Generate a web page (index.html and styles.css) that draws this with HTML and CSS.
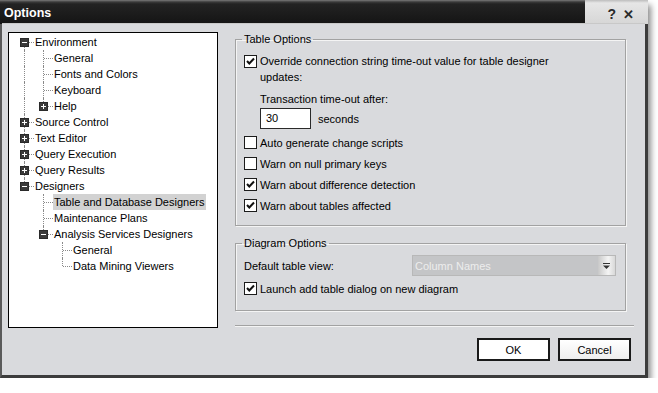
FILE: index.html
```html
<!DOCTYPE html>
<html>
<head>
<meta charset="utf-8">
<link rel="stylesheet" href="styles.css">
</head>
<body>
<div class="window">
  <div class="titlebar">
    <div class="title">Options</div>
    <div class="title-btns"><span class="tb-help">?</span><span class="tb-close">✕</span></div>
  </div>
  <div class="client">
    <div class="tree">
      <div class="node"><span class="g first"><span class="exp minus"></span></span><span class="txt">Environment</span></div>
      <div class="node"><span class="g v"></span><span class="g t"></span><span class="txt">General</span></div>
      <div class="node"><span class="g v"></span><span class="g t"></span><span class="txt">Fonts and Colors</span></div>
      <div class="node"><span class="g v"></span><span class="g t"></span><span class="txt">Keyboard</span></div>
      <div class="node"><span class="g v"></span><span class="g l"><span class="exp plus"></span></span><span class="txt">Help</span></div>
      <div class="node"><span class="g t"><span class="exp plus"></span></span><span class="txt">Source Control</span></div>
      <div class="node"><span class="g t"><span class="exp plus"></span></span><span class="txt">Text Editor</span></div>
      <div class="node"><span class="g t"><span class="exp plus"></span></span><span class="txt">Query Execution</span></div>
      <div class="node"><span class="g t"><span class="exp plus"></span></span><span class="txt">Query Results</span></div>
      <div class="node"><span class="g l"><span class="exp minus"></span></span><span class="txt">Designers</span></div>
      <div class="node"><span class="g"></span><span class="g t"></span><span class="txt sel">Table and Database Designers</span></div>
      <div class="node"><span class="g"></span><span class="g t"></span><span class="txt">Maintenance Plans</span></div>
      <div class="node"><span class="g"></span><span class="g l"><span class="exp minus"></span></span><span class="txt">Analysis Services Designers</span></div>
      <div class="node"><span class="g"></span><span class="g"></span><span class="g t"></span><span class="txt">General</span></div>
      <div class="node"><span class="g"></span><span class="g"></span><span class="g l"></span><span class="txt">Data Mining Viewers</span></div>
    </div>
    <div class="panel">
      <fieldset class="group group-table">
        <legend>Table Options</legend>
        <div class="row row-wrap">
          <span class="cb"><svg viewBox="0 0 11 11" width="11" height="11"><path d="M2 5 L4.3 7.5 L9 2.5" fill="none" stroke="#111" stroke-width="2"/></svg></span>
          <span class="wrap-text">Override connection string time-out value for table designer updates:</span>
        </div>
        <div class="sub">
          <div class="sub-label">Transaction time-out after:</div>
          <div class="sub-input"><span class="textbox">30</span><span>seconds</span></div>
        </div>
        <div class="checks">
          <div class="row"><span class="cb"></span><span>Auto generate change scripts</span></div>
          <div class="row"><span class="cb"></span><span>Warn on null primary keys</span></div>
          <div class="row"><span class="cb"><svg viewBox="0 0 11 11" width="11" height="11"><path d="M2 5 L4.3 7.5 L9 2.5" fill="none" stroke="#111" stroke-width="2"/></svg></span><span>Warn about difference detection</span></div>
          <div class="row"><span class="cb"><svg viewBox="0 0 11 11" width="11" height="11"><path d="M2 5 L4.3 7.5 L9 2.5" fill="none" stroke="#111" stroke-width="2"/></svg></span><span>Warn about tables affected</span></div>
        </div>
      </fieldset>
      <fieldset class="group group-diagram">
        <legend>Diagram Options</legend>
        <div class="combo-row">
          <span class="combo-label">Default table view:</span>
          <div class="combo"><span class="combo-text">Column Names</span><span class="combo-btn"><svg viewBox="0 0 9 8" width="9" height="8"><rect x="1" y="1" width="7" height="1" fill="#333"/><path d="M1 3.5 H8 L4.5 7 Z" fill="#333"/></svg></span></div>
        </div>
        <div class="row"><span class="cb"><svg viewBox="0 0 11 11" width="11" height="11"><path d="M2 5 L4.3 7.5 L9 2.5" fill="none" stroke="#111" stroke-width="2"/></svg></span><span>Launch add table dialog on new diagram</span></div>
      </fieldset>
      <div class="sep"></div>
      <div class="buttons">
        <button class="btn btn-default">OK</button>
        <button class="btn">Cancel</button>
      </div>
    </div>
  </div>
</div>
</body>
</html>
```
FILE: styles.css
```css
* { box-sizing: border-box; }
body {
  margin: 0;
  background: #fff;
  font: 11px "Liberation Sans", Arial, sans-serif;
  color: #000;
}
.window {
  width: 648px;
  height: 378px;
  background: #d9dadd;
  border-left: 2px solid #5a5a5a;
  border-right: 3px solid #3c3c3c;
  border-bottom: 3px solid #3c3c3c;
  box-shadow: 3px 5px 6px rgba(0,0,0,0.45);
  display: flex;
  flex-direction: column;
}
.titlebar {
  height: 24px;
  display: flex;
  margin-left: -2px;
  margin-right: -3px;
}
.title {
  flex: 1;
  background: linear-gradient(#7a7a7a 0, #3a3a3a 2px, #232323 4px, #141414 100%);
  color: #fff;
  font-weight: bold;
  font-size: 12.5px;
  padding: 6px 0 0 4px;
}
.title-btns {
  width: 63px;
  background: linear-gradient(#bdbdbd 0, #e6e6e6 3px, #d6d6d6 100%);
  display: flex;
  justify-content: flex-end;
  align-items: center;
  gap: 7px;
  padding: 4px 14px 0 0;
  color: #2a2a2a;
  font-weight: bold;
  font-size: 14px;
}
.tb-close { font-size: 13px; }
.client {
  flex: 1;
  display: grid;
  grid-template-columns: 210px 1fr;
  column-gap: 17px;
  padding: 8px 13px 0 6px;
  border-top: 1px solid #c8c8c8;
  margin-top: -1px;
}
.tree {
  width: 210px;
  height: 296px;
  background: #fff;
  border: 1px solid #000;
  padding: 1px 0 0 6px;
}
.node {
  display: flex;
  height: 16px;
  align-items: center;
}
.g {
  position: relative;
  width: 19px;
  height: 16px;
  flex: none;
  display: flex;
  align-items: center;
  justify-content: center;
}
.g.v::before, .g.t::before, .g.l::before, .g.first::before {
  content: "";
  position: absolute;
  left: 9px;
  width: 0;
  border-left: 1px dotted #8a8a8a;
}
.g.v::before, .g.t::before { top: 0; bottom: 0; }
.g.l::before { top: 0; height: 8px; }
.g.first::before { top: 8px; bottom: 0; }
.g.t::after, .g.l::after, .g.first::after {
  content: "";
  position: absolute;
  left: 10px;
  right: 0;
  top: 8px;
  border-top: 1px dotted #8a8a8a;
}
.exp {
  position: relative;
  z-index: 1;
  width: 9px;
  height: 9px;
  background: #3a3a3a;
  border: 1px solid #2a2a2a;
  margin-top: 1px;
  display: flex;
  align-items: center;
  justify-content: center;
}
.exp::before {
  content: "";
  position: absolute;
  left: 1px;
  right: 1px;
  top: 3px;
  height: 1px;
  background: #fff;
}
.exp.plus::after {
  content: "";
  position: absolute;
  top: 1px;
  bottom: 1px;
  left: 3px;
  width: 1px;
  background: #fff;
}
.txt {
  padding: 1px 2px 1px 1px;
  line-height: 14px;
  white-space: nowrap;
}
.txt.sel { background: #d2d2d2; }
.panel {
  display: flex;
  flex-direction: column;
}
.group {
  margin: 0 8px 0 0;
  border: 1px solid #a2a2a2;
  box-shadow: 1px 1px 0 #f4f4f4, inset 1px 1px 0 #f4f4f4;
  padding: 0 9px 9px 8px;
  min-width: 0;
}
.group legend {
  padding: 0 2px;
  margin-left: -2px;
  line-height: 14px;
}
.row {
  display: flex;
  align-items: center;
  gap: 3px;
  height: 21px;
}
.row-wrap {
  align-items: flex-start;
  height: auto;
  margin-top: 7px;
  line-height: 16px;
}
.row-wrap .cb { margin-top: 2px; }
.wrap-text { width: 305px; }
.cb {
  width: 13px;
  height: 13px;
  flex: none;
  background: #fff;
  border: 1px solid #1c1c1c;
  display: flex;
  align-items: center;
  justify-content: center;
}
.sub { margin-left: 16px; }
.sub-label { margin-top: 6px; line-height: 16px; }
.sub-input {
  margin-top: 1px;
  display: flex;
  align-items: center;
  gap: 7px;
}
.textbox {
  width: 51px;
  height: 21px;
  background: #fff;
  border: 1px solid #2a2a2a;
  padding-left: 5px;
  line-height: 19px;
}
.checks { margin-top: 3px; }
.group-diagram { margin-top: 10px; padding-bottom: 11px; }
.combo-row {
  display: flex;
  align-items: center;
  margin-top: 5px;
  height: 21px;
}
.combo-label { width: 168px; flex: none; }
.combo {
  width: 204px;
  height: 21px;
  border: 1px solid #b8b8b8;
  background: #c4c5c7;
  display: flex;
  align-items: center;
}
.combo-text {
  flex: 1;
  color: #ededed;
  padding-left: 2px;
}
.combo-btn {
  width: 17px;
  height: 19px;
  background: linear-gradient(90deg, #c8c8c8, #f4f4f4 60%, #d8d8d8);
  display: flex;
  align-items: center;
  justify-content: center;
}
.group-diagram .row { margin-top: 2px; }
.sep {
  margin-top: 14px;
  border-top: 1px solid #a2a2a2;
  border-bottom: 1px solid #f4f4f4;
}
.buttons {
  margin-top: 11px;
  display: flex;
  justify-content: flex-end;
  gap: 8px;
  padding-right: 3px;
}
.btn {
  width: 73px;
  height: 23px;
  font: inherit;
  color: #000;
  border: 2px solid #1a1a1a;
  background: linear-gradient(#ffffff, #eeeeee);
  padding: 0;
}
.btn-default { background: #fff; }
```
